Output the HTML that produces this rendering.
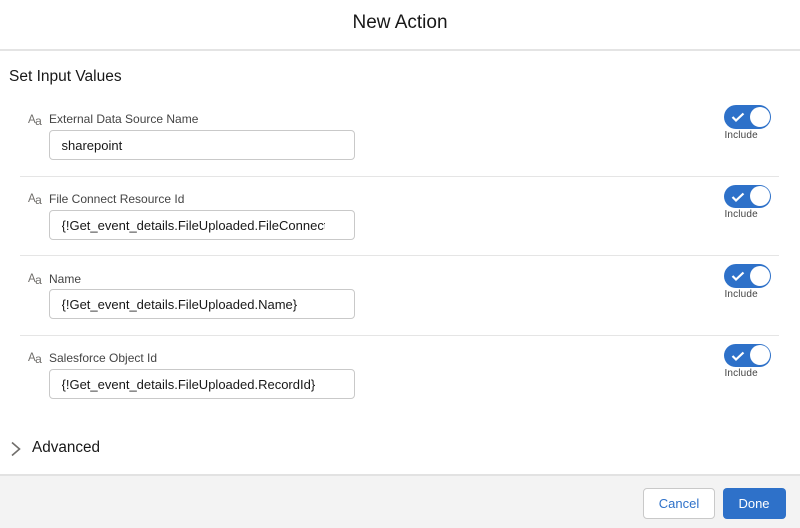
<!DOCTYPE html>
<html><head><meta charset="utf-8">
<style>
html,body{margin:0;padding:0;background:#fff}
body{width:800px;height:528px;position:relative;overflow:hidden;font-family:"Liberation Sans",sans-serif;color:#181818}
.a{position:absolute;white-space:nowrap}
.lbl{font-size:12px;color:#444;left:49px;line-height:14px}
.inp{position:absolute;left:48.5px;width:306px;height:30px;box-sizing:border-box;border:1px solid #c9c9c9;border-radius:4px;background:#fff;font-size:13px;line-height:29px;padding-left:12px;color:#181818;overflow:hidden;white-space:nowrap}
.inp span{display:block;width:263px;overflow:hidden}
.sep{position:absolute;left:20px;width:759px;height:1px;background:#e5e5e5}
.tog{position:absolute;left:724px;width:47px;height:23.5px;border-radius:12px;background:#2e71c9}
.tog i{position:absolute;right:1.5px;top:1.75px;width:20px;height:20px;border-radius:50%;background:#fff}
.tog svg{position:absolute;left:7px;top:6px}
.inc{left:724.5px;font-size:10px;color:#444;letter-spacing:.15px;line-height:12px}
.aa{left:28px;color:#706e6b;line-height:12px}
.aa b{font-weight:normal;font-size:11.5px}
.aa em{font-style:normal;font-size:12px;position:relative;top:2px;left:-.5px}
</style></head><body>
<div class="a" style="left:0;top:1px;width:800px;text-align:center;font-size:19px;line-height:44px">New Action</div>
<div class="a" style="left:0;top:48.5px;width:800px;height:2px;background:#e4e4e4"></div>
<div class="a" style="left:9px;top:68px;font-size:15.5px;line-height:18px">Set Input Values</div>

<div class="a aa" style="top:112.5px"><b>A</b><em>a</em></div>
<div class="a lbl" style="top:112px">External Data Source Name</div>
<div class="inp" style="top:130px"><span>sharepoint</span></div>
<div class="tog" style="top:105px"><svg width="14" height="12" viewBox="0 0 14 12"><path d="M1.5 6 L5 9.5 L12.5 2.5" fill="none" stroke="#fff" stroke-width="2.2"/></svg><i></i></div>
<div class="a inc" style="top:129.5px">Include</div>
<div class="sep" style="top:176px"></div>

<div class="a aa" style="top:192px"><b>A</b><em>a</em></div>
<div class="a lbl" style="top:192px">File Connect Resource Id</div>
<div class="inp" style="top:209.5px"><span>{!Get_event_details.FileUploaded.FileConnectResourceId}</span></div>
<div class="tog" style="top:184.5px"><svg width="14" height="12" viewBox="0 0 14 12"><path d="M1.5 6 L5 9.5 L12.5 2.5" fill="none" stroke="#fff" stroke-width="2.2"/></svg><i></i></div>
<div class="a inc" style="top:209px">Include</div>
<div class="sep" style="top:255px"></div>

<div class="a aa" style="top:271.5px"><b>A</b><em>a</em></div>
<div class="a lbl" style="top:271.5px">Name</div>
<div class="inp" style="top:289px"><span>{!Get_event_details.FileUploaded.Name}</span></div>
<div class="tog" style="top:264px"><svg width="14" height="12" viewBox="0 0 14 12"><path d="M1.5 6 L5 9.5 L12.5 2.5" fill="none" stroke="#fff" stroke-width="2.2"/></svg><i></i></div>
<div class="a inc" style="top:288.5px">Include</div>
<div class="sep" style="top:335px"></div>

<div class="a aa" style="top:351px"><b>A</b><em>a</em></div>
<div class="a lbl" style="top:351px">Salesforce Object Id</div>
<div class="inp" style="top:368.5px"><span>{!Get_event_details.FileUploaded.RecordId}</span></div>
<div class="tog" style="top:343.5px"><svg width="14" height="12" viewBox="0 0 14 12"><path d="M1.5 6 L5 9.5 L12.5 2.5" fill="none" stroke="#fff" stroke-width="2.2"/></svg><i></i></div>
<div class="a inc" style="top:368px">Include</div>

<svg class="a" style="left:10px;top:441px" width="12" height="16" viewBox="0 0 12 16"><path d="M2 1.5 L9.5 8 L2 14.5" fill="none" stroke="#706e6b" stroke-width="1.6"/></svg>
<div class="a" style="left:32px;top:438.5px;font-size:15.3px;line-height:18px">Advanced</div>

<div class="a" style="left:0;top:474px;width:800px;height:54px;background:#f3f3f3;border-top:2px solid #e2e2e2;box-sizing:border-box"></div>
<div class="a" style="left:643px;top:488px;width:72px;height:31px;box-sizing:border-box;border:1px solid #c9c9c9;border-radius:4px;background:#fff;color:#2e71c9;font-size:13px;line-height:29px;text-align:center">Cancel</div>
<div class="a" style="left:722.5px;top:488px;width:63px;height:31px;border-radius:4px;background:#2e71c9;color:#fff;font-size:13px;line-height:31px;text-align:center">Done</div>
</body></html>
